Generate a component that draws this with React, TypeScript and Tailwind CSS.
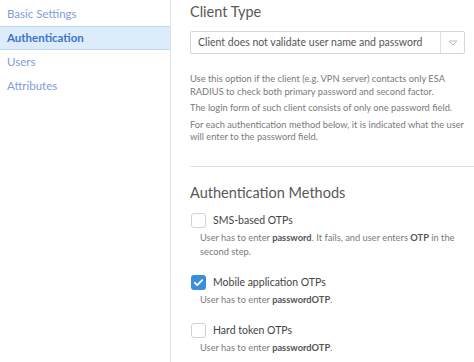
import React from 'react'

const NAV = ['Basic Settings', 'Authentication', 'Users', 'Attributes']

function Checkbox({ checked }: { checked?: boolean }) {
  if (checked) {
    return (
      <span className="flex h-[15px] w-[15px] shrink-0 items-center justify-center rounded-[3px] bg-[#3b8ede]">
        <svg width="11" height="11" viewBox="0 0 12 12" fill="none">
          <path d="M2 6.3l2.6 2.6L10 3.4" stroke="#fff" strokeWidth="2" strokeLinecap="round" strokeLinejoin="round" />
        </svg>
      </span>
    )
  }
  return <span className="h-[15px] w-[15px] shrink-0 rounded-[3px] border border-[#d2d2d2] bg-white" />
}

function Method({ label, checked, children }: { label: string; checked?: boolean; children: React.ReactNode }) {
  return (
    <div>
      <div className="flex h-[15px] items-center gap-[7px] pl-px">
        <Checkbox checked={checked} />
        <span className="text-[10.5px] leading-[15px] text-[#444]">{label}</span>
      </div>
      <p className="mt-[3px] pl-[10px] pr-[8px] text-[9.3px] leading-[14px] text-[#7a7a7a]">{children}</p>
    </div>
  )
}

export default function App() {
  return (
    <div className="flex h-[362px] w-[474px] overflow-hidden bg-white font-['Lato',sans-serif]">
      <aside className="w-[171px] shrink-0 border-r border-[#e3e3e3] pt-[2px]">
        {NAV.map((item) => {
          const active = item === 'Authentication'
          return (
            <div
              key={item}
              className={
                active
                  ? 'flex h-[24px] items-center border-y border-[#bcd7f2] bg-[#ddecfb] pl-[7px] text-[11.5px] font-bold text-[#3f73c6]'
                  : 'flex h-[24px] items-center pl-[7px] text-[11.5px] text-[#7f9dd6]'
              }
            >
              {item}
            </div>
          )
        })}
      </aside>

      <main className="flex-1 pl-[19px]">
        <h2 className="text-[14.5px] leading-[24px] text-[#585858]">Client Type</h2>

        <div className="mt-[7px] mr-[9px] flex h-[23px] items-center rounded-[2px] border border-[#d6d6d6]">
          <span className="flex-1 pl-[7px] text-[10.5px] text-[#555]">Client does not validate user name and password</span>
          <span className="flex h-full w-[24px] items-center justify-center border-l border-[#e0e0e0]">
            <svg width="10" height="6" viewBox="0 0 10 6" fill="none">
              <path d="M1 1h8L5 5z" stroke="#bdbdbd" strokeWidth="1" strokeLinejoin="round" />
            </svg>
          </span>
        </div>

        <div className="mt-[19px] space-y-[4px] text-[9.3px] leading-[12.5px] text-[#7a7a7a]">
          <p>Use this option if the client (e.g. VPN server) contacts only ESA RADIUS to check both primary password and second factor.</p>
          <p>The login form of such client consists of only one password field.</p>
          <p>For each authentication method below, it is indicated what the user will enter to the password field.</p>
        </div>

        <div className="mt-[22px] border-t border-[#e0e0e0]" />

        <h2 className="mt-[14px] text-[14.5px] leading-[24px] text-[#585858]">Authentication Methods</h2>

        <div className="mt-[8px] space-y-[16px]">
          <Method label="SMS-based OTPs">
            User has to enter <b className="font-bold text-[#555]">password</b>. It fails, and user enters{' '}
            <b className="font-bold text-[#555]">OTP</b> in the second step.
          </Method>
          <Method label="Mobile application OTPs" checked>
            User has to enter <b className="font-bold text-[#555]">passwordOTP</b>.
          </Method>
          <Method label="Hard token OTPs">
            User has to enter <b className="font-bold text-[#555]">passwordOTP</b>.
          </Method>
        </div>
      </main>
    </div>
  )
}
